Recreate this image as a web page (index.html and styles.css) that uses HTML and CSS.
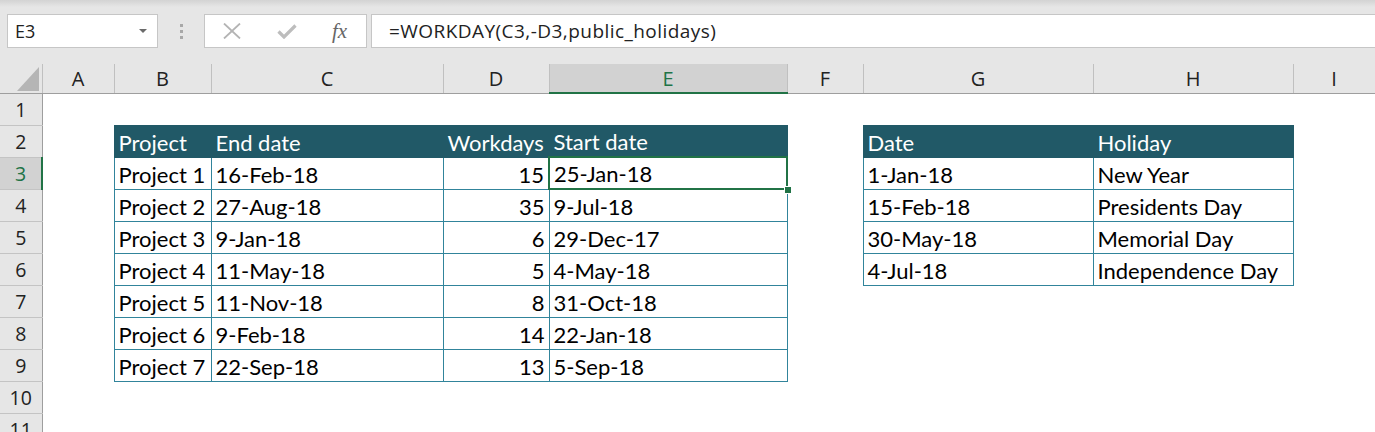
FILE: index.html
```html
<html>
  <head>
    <link rel="stylesheet" href="styles.css">
  </head>
  <body>
    <div class="toolbar">
      <div class="name_box">
        <span>E3</span>
        <span class="drop"></span>
      </div>
      <div class="grip"><i></i><i></i><i></i></div>
      <div class="fx_box">
        <svg class="ico_cancel" width="18" height="16" viewBox="0 0 18 16"><path d="M1 0.5 L17 15.5 M17 0.5 L1 15.5" stroke="#b4b4b4" stroke-width="1.8" fill="none"/></svg>
        <svg class="ico_enter" width="20" height="15" viewBox="0 0 20 15"><path d="M1.5 7.5 L7 13 L18.5 1.5" stroke="#bdbdbd" stroke-width="3.2" fill="none"/></svg>
        <span class="fx">fx</span>
      </div>
      <div class="formula">=WORKDAY(C3,-D3,public_holidays)</div>
    </div>

    <table class="sheet">
      <colgroup>
        <col style="width:42px"><col style="width:72px"><col style="width:97px"><col style="width:232px"><col style="width:106px">
        <col style="width:238px"><col style="width:76px"><col style="width:230px"><col style="width:200px"><col style="width:82px">
      </colgroup>
      <tr class="col_head">
        <th class="corner"><span class="tri"></span></th>
        <th>A</th><th>B</th><th>C</th><th>D</th><th class="col_sel">E</th><th>F</th><th>G</th><th>H</th><th>I</th>
      </tr>
      <tr>
        <th class="row_head">1</th>
        <td></td><td></td><td></td><td></td><td></td><td></td><td></td><td></td><td></td>
      </tr>
      <tr>
        <th class="row_head">2</th>
        <td></td><td class="hd">Project</td><td class="hd">End date</td><td class="hd">Workdays</td><td class="hd">Start date</td>
        <td></td><td class="hd">Date</td><td class="hd">Holiday</td><td></td>
      </tr>
      <tr>
        <th class="row_head row_sel">3</th>
        <td></td><td class="c">Project 1</td><td class="c">16-Feb-18</td><td class="c num">15</td><td class="c sel">25-Jan-18</td>
        <td></td><td class="c">1-Jan-18</td><td class="c">New Year</td><td></td>
      </tr>
      <tr>
        <th class="row_head">4</th>
        <td></td><td class="c">Project 2</td><td class="c">27-Aug-18</td><td class="c num">35</td><td class="c">9-Jul-18</td>
        <td></td><td class="c">15-Feb-18</td><td class="c">Presidents Day</td><td></td>
      </tr>
      <tr>
        <th class="row_head">5</th>
        <td></td><td class="c">Project 3</td><td class="c">9-Jan-18</td><td class="c num">6</td><td class="c">29-Dec-17</td>
        <td></td><td class="c">30-May-18</td><td class="c">Memorial Day</td><td></td>
      </tr>
      <tr>
        <th class="row_head">6</th>
        <td></td><td class="c">Project 4</td><td class="c">11-May-18</td><td class="c num">5</td><td class="c">4-May-18</td>
        <td></td><td class="c">4-Jul-18</td><td class="c">Independence Day</td><td></td>
      </tr>
      <tr>
        <th class="row_head">7</th>
        <td></td><td class="c">Project 5</td><td class="c">11-Nov-18</td><td class="c num">8</td><td class="c">31-Oct-18</td>
        <td></td><td></td><td></td><td></td>
      </tr>
      <tr>
        <th class="row_head">8</th>
        <td></td><td class="c">Project 6</td><td class="c">9-Feb-18</td><td class="c num">14</td><td class="c">22-Jan-18</td>
        <td></td><td></td><td></td><td></td>
      </tr>
      <tr>
        <th class="row_head">9</th>
        <td></td><td class="c">Project 7</td><td class="c">22-Sep-18</td><td class="c num">13</td><td class="c">5-Sep-18</td>
        <td></td><td></td><td></td><td></td>
      </tr>
      <tr>
        <th class="row_head">10</th>
        <td></td><td></td><td></td><td></td><td></td><td></td><td></td><td></td><td></td>
      </tr>
      <tr>
        <th class="row_head">11</th>
        <td></td><td></td><td></td><td></td><td></td><td></td><td></td><td></td><td></td>
      </tr>
    </table>
  </body>
</html>
```

FILE: styles.css
```css
body { margin: 0; overflow: hidden; background: #fff; }

/* formula bar */
.toolbar { display: flex; align-items: center; height: 64px; box-sizing: border-box; padding: 14px 0 16px 7px;
  background: linear-gradient(#d3d3d3, #e6e6e6 7px); font-family: "Open Sans", sans-serif; font-size: 18px; color: #222; }
.name_box { display: flex; align-items: center; justify-content: space-between; width: 151px; height: 34px; box-sizing: border-box;
  border: 1px solid #c6c6c6; background: #fff; padding: 0 10px 0 7px; }
.drop { width: 0; height: 0; border-left: 4px solid transparent; border-right: 4px solid transparent; border-top: 4px solid #6a6a6a; }
.grip { width: 46px; display: flex; flex-direction: column; align-items: center; gap: 3px; }
.grip i { display: block; width: 3px; height: 3px; background: #a8a8a8; }
.fx_box { display: flex; align-items: center; width: 163px; height: 34px; box-sizing: border-box; border: 1px solid #c6c6c6;
  background: #fff; padding-left: 18px; }
.ico_enter { margin-left: 36px; }
.fx { margin-left: 35px; font-family: "Liberation Serif", serif; font-style: italic; font-size: 21px; color: #666; }
.formula { flex: 1; display: flex; align-items: center; height: 34px; box-sizing: border-box; margin-left: 4px;
  border: 1px solid #c6c6c6; border-right: none; background: #fff; padding-left: 17px; font-size: 19px; letter-spacing: 0.45px; }

/* grid */
.sheet { border-collapse: collapse; table-layout: fixed; width: 1375px; font-family: Lato, sans-serif; font-size: 22px; color: #000; }
.sheet tr { height: 32px; }
.sheet td { padding: 0 4px 2px; vertical-align: bottom; line-height: 24px; white-space: nowrap; overflow: hidden; }

.col_head th { height: 29px; padding: 0; background: #e6e6e6; border-right: 1px solid #c0c0c0; border-bottom: 1px solid #9e9e9e;
  font-family: "Open Sans", sans-serif; font-weight: normal; font-size: 20px; color: #222; }
.sheet .col_head { height: 29px; }
.col_head .col_sel { background: #d2d2d2; color: #217346; border-bottom: 2px solid #217346; }
.corner { position: relative; }
.tri { position: absolute; right: 3px; bottom: 2px; width: 0; height: 0; border-left: 22px solid transparent; border-bottom: 24px solid #b5b5b5; }

.row_head { padding: 0; background: #e6e6e6; border-right: 1px solid #9e9e9e; border-bottom: 1px solid #c4c4c4;
  font-family: "Open Sans", sans-serif; font-weight: normal; font-size: 19.5px; color: #222; }
.row_head.row_sel { background: #d2d2d2; color: #217346; border-right: 2px solid #217346; }

/* data tables */
.hd { background: #215967; color: #fff; border: 1px solid #215967; }
.c { border: 1px solid #31849b; }
.num { text-align: right; }
.sheet .sel { position: relative; border: 2px solid #217346; overflow: visible; }
.sel::after { content: ""; position: absolute; right: -6px; bottom: -6px; width: 6px; height: 6px; background: #217346; border: 1px solid #fff; }
```
